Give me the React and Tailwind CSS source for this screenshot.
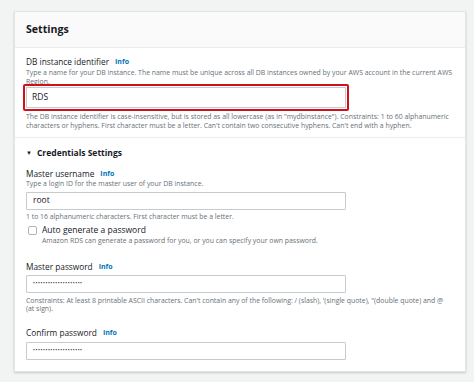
import React from "react";

const Info = () => (
  <span className="ml-[6px] text-[7px] font-bold text-[#0073bb]">Info</span>
);

const Label = ({ children, cls = "" }) => (
  <div className={`h-[10px] leading-[10px] text-[8.3px] text-[#16191f] flex items-center ${cls}`}>
    <span>{children}</span>
    <Info />
  </div>
);

const Desc = ({ children, cls = "" }) => (
  <div className={`text-[6.9px] leading-[8.5px] text-[#687078] ${cls}`}>{children}</div>
);

const Input = ({ children, cls = "", dots = false }) => (
  <div
    className={`w-[320px] h-[18px] bg-white border border-[#c6cccc] rounded-[1px] flex items-center pl-[6px] ${cls}`}
  >
    {dots ? (
      <span className="text-[5px] tracking-[0.6px] text-[#16191f]">{children}</span>
    ) : (
      <span className="text-[8.5px] text-[#16191f]">{children}</span>
    )}
  </div>
);

export default function App() {
  const dots = "•".repeat(20);
  return (
    <div
      className="w-[474px] h-[382px] bg-[#f2f3f3] pt-[11px] pl-[14px]"
      style={{ fontFamily: '"Open Sans", "Noto Sans", sans-serif' }}
    >
      <div className="w-[452px] h-[361px] bg-white border border-[#e1e4e4] shadow-[0_1px_2px_rgba(0,0,0,0.18)] overflow-hidden">
        <div className="h-[36px] bg-[#fafafa] border-b border-[#eaeded] flex items-center pl-[11px]">
          <span className="text-[10.6px] font-bold text-[#16191f]">Settings</span>
        </div>
        <div className="pl-[11px] pt-[9px]">
          <Label>DB instance identifier</Label>
          <Desc cls="mt-[2px] w-[434px]">
            Type a name for your DB instance. The name must be unique across all DB instances owned by your AWS account in the current AWS Region.
          </Desc>
          <div className="-ml-[3px] -mt-[2px] w-[326px] h-[27px] border-[2.5px] border-[#d0101b] rounded-[2px] p-[1px] relative">
            <div className="w-full h-full bg-white border border-[#c6cccc] flex items-center pl-[5px]">
              <span className="text-[8.5px] text-[#16191f]">RDS</span>
            </div>
          </div>
          <Desc cls="mt-[2px] w-[434px]">
            The DB instance identifier is case-insensitive, but is stored as all lowercase (as in "mydbinstance"). Constraints: 1 to 60 alphanumeric characters or hyphens. First character must be a letter. Can't contain two consecutive hyphens. Can't end with a hyphen.
          </Desc>
        </div>
        <div className="mt-[7px] border-t border-[#eaeded]" />
        <div className="pl-[11px]">
          <div className="mt-[9px] h-[12px] flex items-center text-[8.5px] font-bold text-[#16191f]">
            <span className="text-[6px] mr-[5px]">▼</span>
            <span>Credentials Settings</span>
          </div>
          <Label cls="mt-[10px]">Master username</Label>
          <Desc cls="mt-[1px]">Type a login ID for the master user of your DB instance.</Desc>
          <Input cls="mt-[3px]">root</Input>
          <Desc cls="mt-[3px]">1 to 16 alphanumeric characters. First character must be a letter.</Desc>
          <div className="mt-[3px] flex items-start">
            <div className="mt-[2px] ml-[2px] w-[9px] h-[9px] border border-[#aab7b8] rounded-[2px] bg-white" />
            <div className="ml-[5px]">
              <div className="h-[12px] leading-[12px] text-[8.5px] text-[#16191f]">Auto generate a password</div>
              <Desc cls="mt-[1px]">Amazon RDS can generate a password for you, or you can specify your own password.</Desc>
            </div>
          </div>
          <Label cls="mt-[16px]">Master password</Label>
          <Input cls="mt-[3px]" dots>{dots}</Input>
          <Desc cls="mt-[4px] w-[436px]">
            Constraints: At least 8 printable ASCII characters. Can't contain any of the following: / (slash), '(single quote), "(double quote) and @{" "}(at&nbsp;sign).
          </Desc>
          <Label cls="mt-[14px]">Confirm password</Label>
          <Input cls="mt-[4px]" dots>{dots}</Input>
        </div>
      </div>
    </div>
  );
}
